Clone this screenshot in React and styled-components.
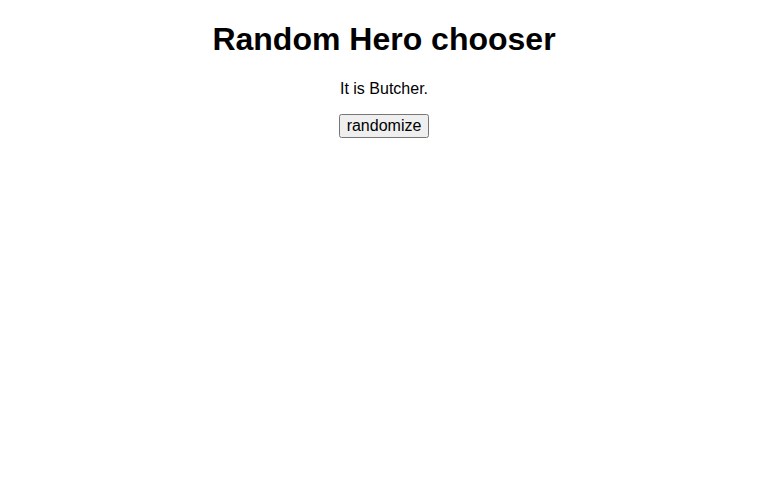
import React, { useState } from "react";
import styled, { createGlobalStyle } from "styled-components";

const heroes = ["Butcher", "Pudge", "Axe", "Lina", "Sven", "Tiny"];

export const GlobalStyle = createGlobalStyle`
body {
    margin: 0;
    background-color: #ffffff;
    font-family: "Liberation Sans", Arial, sans-serif;
}
`;

const Wrapper = styled.div`
  text-align: center;
  color: #000;
`;

const Title = styled.h1`
  font-size: 32px;
  margin: 21.44px 0;
`;

const Result = styled.p`
  font-size: 16px;
  margin: 16px 0;
`;

const Button = styled.button`
  font-family: inherit;
  font-size: 16px;
`;

function App() {
  const [hero, setHero] = useState("Butcher");

  const randomize = () => {
    setHero(heroes[Math.floor(Math.random() * heroes.length)]);
  };

  return (
    <Wrapper>
      <GlobalStyle />
      <Title>Random Hero chooser</Title>
      <Result>It is {hero}.</Result>
      <Button onClick={randomize}>randomize</Button>
    </Wrapper>
  );
}

export default App;
